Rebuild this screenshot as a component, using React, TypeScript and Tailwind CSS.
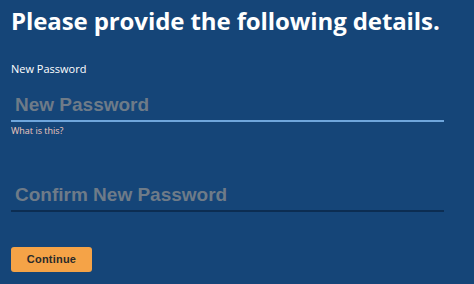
import { useState } from 'react';

export default function App() {
  const [pwd, setPwd] = useState('');
  const [confirm, setConfirm] = useState('');

  return (
    <div className="w-[474px] h-[284px] overflow-hidden bg-[#154578] pl-[11px] pr-[30px] flex flex-col items-start">
      <h1 className="pt-[6px] whitespace-nowrap text-[24px] leading-[30px] font-bold text-white tracking-[-0.1px] font-['Open_Sans','Noto_Sans',sans-serif]">
        Please provide the following details.
      </h1>

      <label className="mt-[25px] text-[11px] leading-[15px] text-white font-['Open_Sans','Noto_Sans',sans-serif]">
        New Password
      </label>

      <input
        type="password"
        value={pwd}
        onChange={e => setPwd(e.target.value)}
        placeholder="New Password"
        className="mt-[14px] w-full h-[32px] bg-transparent border-b-2 border-[#6fa6dc] px-[4px] text-[19px] font-bold text-white placeholder:text-[#6e7b88] outline-none font-['Liberation_Sans',Arial,sans-serif]"
      />
      <a className="mt-[3px] text-[9px] leading-[12px] text-[#f2c9bf] cursor-pointer font-['Open_Sans','Noto_Sans',sans-serif]">
        What is this?
      </a>

      <input
        type="password"
        value={confirm}
        onChange={e => setConfirm(e.target.value)}
        placeholder="Confirm New Password"
        className="mt-[43px] w-full h-[32px] bg-transparent border-b-2 border-[#0c2d52] px-[4px] text-[19px] font-bold text-white placeholder:text-[#6e7b88] outline-none font-['Liberation_Sans',Arial,sans-serif]"
      />

      <button className="mt-[35px] w-[81px] h-[25px] rounded-[3px] bg-[#f5a347] text-[11px] font-bold text-[#2a2a2a] tracking-[0.2px] font-['Liberation_Sans',Arial,sans-serif]">
        Continue
      </button>
    </div>
  );
}
